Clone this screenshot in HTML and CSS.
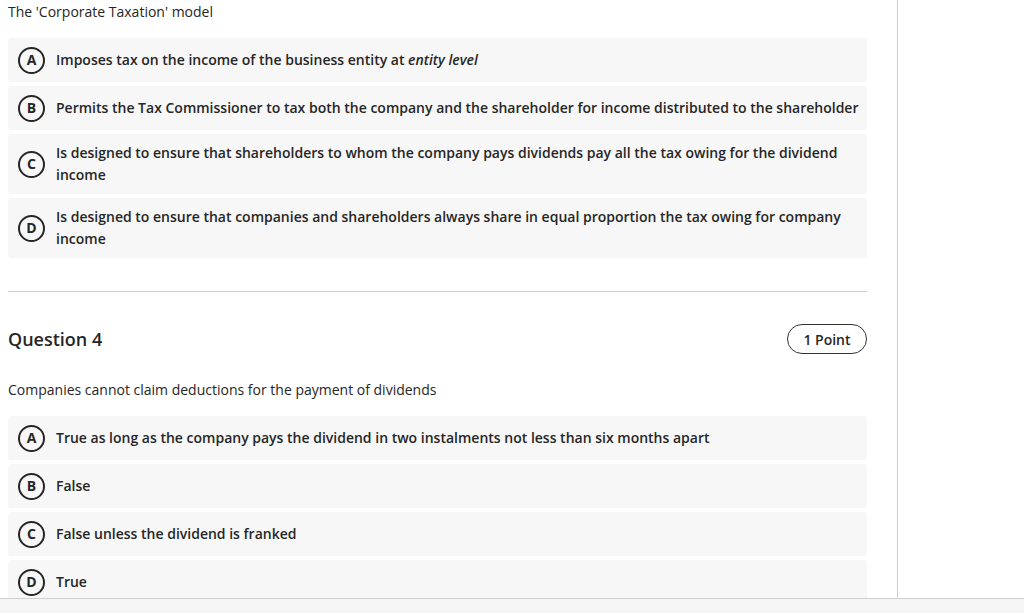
FILE: index.html
```html
<!DOCTYPE html>
<html lang="en">

<head>
    <meta charset="UTF-8">
    <meta name="viewport" content="width=device-width, initial-scale=1.0">
    <title>Quiz</title>
    <link rel="stylesheet" href="styles.css">
</head>

<body>
    <div class="page">
        <div class="main">
            <div class="question first">
                <p class="prompt">The 'Corporate Taxation' model</p>
                <ul class="options">
                    <li><span class="letter">A</span><span class="answer">Imposes tax on the income of the business entity at <em>entity level</em></span></li>
                    <li><span class="letter">B</span><span class="answer">Permits the Tax Commissioner to tax both the company and the shareholder for income distributed to the shareholder</span></li>
                    <li><span class="letter">C</span><span class="answer">Is designed to ensure that shareholders to whom the company pays dividends pay all the tax owing for the dividend income</span></li>
                    <li><span class="letter">D</span><span class="answer">Is designed to ensure that companies and shareholders always share in equal proportion the tax owing for company income</span></li>
                </ul>
            </div>

            <div class="question">
                <div class="head">
                    <h2>Question 4</h2>
                    <span class="points">1 Point</span>
                </div>
                <p class="prompt">Companies cannot claim deductions for the payment of dividends</p>
                <ul class="options">
                    <li><span class="letter">A</span><span class="answer">True as long as the company pays the dividend in two instalments not less than six months apart</span></li>
                    <li><span class="letter">B</span><span class="answer">False</span></li>
                    <li><span class="letter">C</span><span class="answer">False unless the dividend is franked</span></li>
                    <li><span class="letter">D</span><span class="answer">True</span></li>
                </ul>
            </div>
        </div>
        <div class="side"></div>
    </div>
    <div class="footer"></div>
</body>

</html>
```

FILE: styles.css
```css
html, body {
    margin: 0;
    height: 100%;
    overflow: hidden;
}
body {
    font-family: "Open Sans", "Liberation Sans", sans-serif;
    font-size: 14px;
    color: #262626;
    background: #fff;
}

/*--------------------------*/
.page {
    display: flex;
    height: 100%;
}
.main {
    width: 859px;
    padding: 1px 30px 0 8px;
    border-right: 1px solid #cfcfcf;
}
.side {
    flex: 1;
}

.prompt {
    margin: 0 0 15px;
    line-height: 22px;
}

.options {
    list-style: none;
    margin: 0;
    padding: 0;
    display: flex;
    flex-direction: column;
    gap: 4px;
}
.options li {
    display: flex;
    align-items: center;
    min-height: 28px;
    padding: 8px 4px 8px 10px;
    background: #f7f7f7;
    border-radius: 3px;
}
.options .letter {
    flex: none;
    box-sizing: border-box;
    width: 27px;
    height: 27px;
    border: 2px solid #262626;
    border-radius: 50%;
    display: flex;
    align-items: center;
    justify-content: center;
    font-weight: 700;
    font-size: 14px;
    line-height: 1;
    margin-right: 11px;
}
.options .answer {
    font-weight: 600;
    line-height: 22px;
}
.options em {
    font-style: italic;
}

.question.first {
    padding-bottom: 33px;
    border-bottom: 1px solid #cfcfcf;
}

.head {
    display: flex;
    align-items: center;
    justify-content: space-between;
    margin: 32px 0 25px;
}
.head h2 {
    margin: 0;
    font-size: 18px;
    font-weight: 600;
    line-height: 30px;
}
.points {
    box-sizing: border-box;
    height: 30px;
    width: 80px;
    border: 1px solid #333;
    border-radius: 15px;
    display: flex;
    align-items: center;
    justify-content: center;
    font-weight: 600;
}
.head + .prompt {
    margin-bottom: 15px;
}

.footer {
    position: fixed;
    left: 0;
    right: 0;
    bottom: 0;
    height: 14px;
    background: #f5f5f5;
    border-top: 1px solid #cfcfcf;
}
```
